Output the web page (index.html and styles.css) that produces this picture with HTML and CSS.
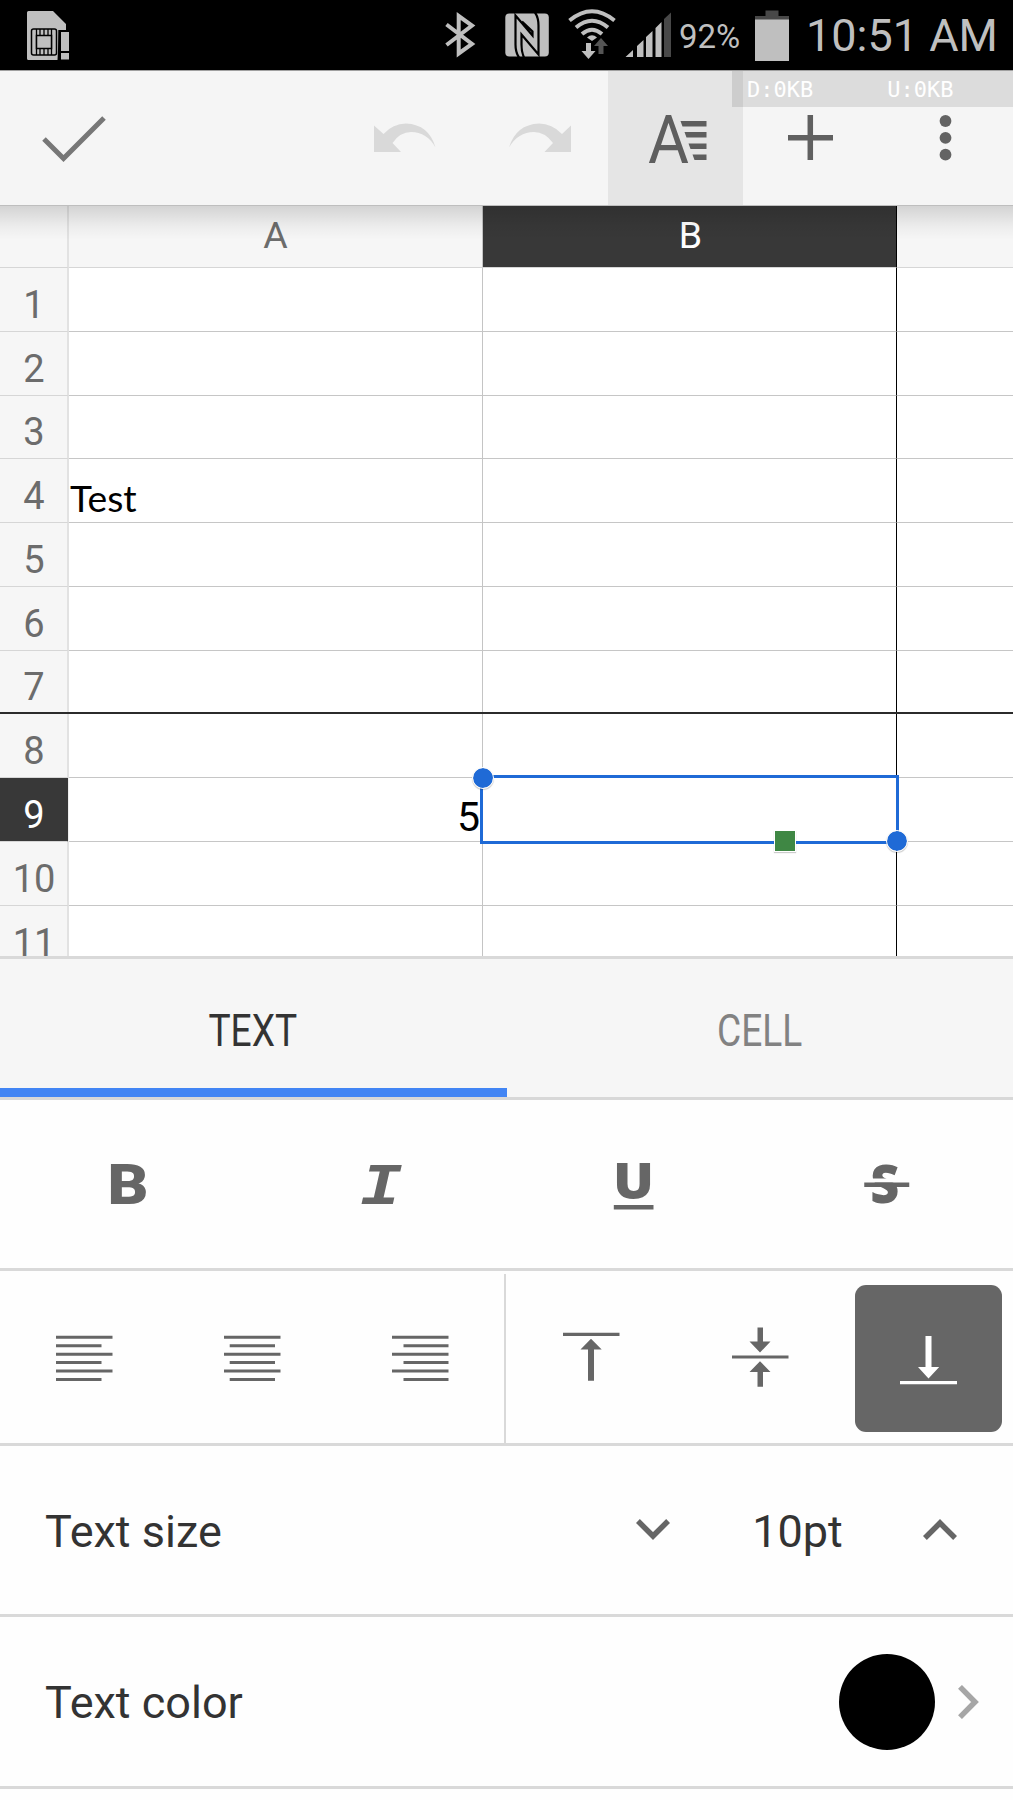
FILE: index.html
```
<!DOCTYPE html>
<html lang="en">
<head>
    <meta charset="UTF-8">
    <meta name="viewport" content="width=device-width, initial-scale=1.0">
    <title>Sheets</title>
    <link rel="stylesheet" href="styles.css">
</head>
<body>

    <div class="status-bar">
        <svg class="sim" width="44" height="52" viewBox="26 10 44 52">
            <path d="M28.500 11H53L66 24V30H59L57.500 60H28.500Q27 60 27 58.500V12.500Q27 11 28.500 11Z" fill="#bfbfbf"/>
            <rect x="31.500" y="29" width="25" height="26" rx="2" fill="#bfbfbf" stroke="#000" stroke-width="1.500"/>
            <path d="M36.500 29V55M51.500 29V55M40 29V35M44 29V35M48 29V35M40 49V55M44 49V55M48 49V55" stroke="#000" stroke-width="1.300"/>
            <rect x="36.500" y="35.500" width="15" height="13" fill="#bfbfbf" stroke="#000" stroke-width="1.500"/>
            <path d="M58.300 30H70V61H58.300Z" fill="#000"/>
            <path d="M61 32H69V51H61ZM61 53H69V59.500H61Z" fill="#bfbfbf"/>
        </svg>
        <div class="status-icons">
            <svg width="34" height="50" viewBox="443 10 34 50">
                <path d="M446.500 24.500L472 44L458.700 53.500V16L472 25.500L446.500 45" fill="none" stroke="#bfbfbf" stroke-width="4"/>
            </svg>
            <svg width="45" height="44" viewBox="505 12.500 45 44">
                <rect x="505.300" y="13" width="43.500" height="43" rx="4" fill="#bfbfbf"/>
                <path d="M519 57Q515.500 52 515.500 44V15L532.500 35V31L522 21M535 12Q538.500 17 538.500 25V54L521.500 34V44Q521.500 52 524 57" fill="none" stroke="#000" stroke-width="2.200"/>
            </svg>
            <svg width="48" height="52" viewBox="568 9 48 52">
                <g fill="none" stroke="#bfbfbf" stroke-width="4">
                    <path d="M569.500 20.500Q592 2 614.500 20.500"/>
                    <path d="M576 27.500Q592 14 608 27.500"/>
                    <path d="M582 34Q592 25.500 602 34"/>
                </g>
                <path d="M587 37.500Q592 33 597 37.500L592 41Z" fill="#bfbfbf"/>
                <path d="M586 43H591V51H595.500L588.500 59L581.500 51H586Z" fill="#bfbfbf"/>
                <path d="M601 38L608 46H603.500V54H598.500V46H594Z" fill="#555"/>
            </svg>
            <svg width="46" height="46" viewBox="625 12 46 46">
                <path d="M625.500 57L633 50V57ZM637 46L643.500 40V57H637ZM646 37L652.500 31V57H646ZM655.500 28L661.500 22V57H655.500Z" fill="#bfbfbf"/>
                <path d="M664 19L671 12.500V57H664Z" fill="#484848"/>
            </svg>
            <span class="percent">92%</span>
            <svg class="battery" width="34" height="51" viewBox="755 8 34 51">
                <path d="M765.500 8.500H778.500V14H789V18H755V14H765.500Z" fill="#484848"/>
                <rect x="755" y="17.500" width="34" height="41.500" fill="#bfbfbf"/>
            </svg>
            <span class="clock">10:51 AM</span>
        </div>
    </div>

    <div class="toolbar">
        <button class="tool done">
            <svg width="148" height="135" viewBox="0 71 148 135">
                <path d="M44 139L63.500 158.500L104 118" fill="none" stroke="#777" stroke-width="5"/>
            </svg>
        </button>
        <button class="tool">
            <svg width="135" height="135" viewBox="338 71 135 135">
                <path d="M374 125.500L383.500 134Q393 123.500 406 123.500Q429 124.500 435.500 147.500Q427 132 411 132Q400 132 392.500 143L401 152H374Z" fill="#d9d9d9"/>
            </svg>
        </button>
        <button class="tool">
            <svg width="135" height="135" viewBox="473 71 135 135">
                <path d="M571 125.500L562 134Q552 123.500 539 123.500Q516 124.500 509 147.500Q518 132 534 132Q545 132 553 143L544.500 152H571Z" fill="#d9d9d9"/>
            </svg>
        </button>
        <button class="tool active">
            <svg width="135" height="135" viewBox="608 71 135 135">
                <text class="format-letter" x="648" y="163" textLength="41" lengthAdjust="spacingAndGlyphs">A</text>
                <path d="M680.500 121H706.500V126.500H682.500ZM684.500 132H706.500V137.500H686.500ZM688.500 143.500H706.500V149H690.500ZM692.500 154.500H706.500V160H694.500Z" fill="#5e5e5e"/>
            </svg>
        </button>
        <button class="tool">
            <svg width="135" height="135" viewBox="743 71 135 135">
                <path d="M788 137.800H833M810.300 115V160" fill="none" stroke="#606060" stroke-width="5.500"/>
            </svg>
        </button>
        <button class="tool">
            <svg width="135" height="135" viewBox="878 71 135 135">
                <g fill="#636363">
                    <circle cx="945.500" cy="121" r="5.900"/>
                    <circle cx="945.500" cy="137.800" r="5.900"/>
                    <circle cx="945.500" cy="154.700" r="5.900"/>
                </g>
            </svg>
        </button>
        <div class="net-speed"><span>D:0KB</span><span>U:0KB</span></div>
    </div>

    <div class="sheet" id="sheet">
        <div class="col-head"></div>
        <div class="col-head">A</div>
        <div class="col-head selected">B</div>
        <div class="col-head last"></div>
        <!-- rows are added by the script below -->
        <div class="freeze-row"></div>
        <div class="selection">
            <i class="handle start"></i>
            <i class="handle end"></i>
            <i class="fill-handle"></i>
        </div>
    </div>

    <div class="tabs">
        <div class="tab current"><span>TEXT</span></div>
        <div class="tab"><span>CELL</span></div>
    </div>

    <div class="panel-row styles-row">
        <svg viewBox="0 1100 253.250 168">
            <text class="letter bold" x="107.500" y="1204" textLength="41" lengthAdjust="spacingAndGlyphs">B</text>
        </svg>
        <svg viewBox="253.250 1100 253.250 168">
            <text class="letter italic" x="360" y="1204" textLength="42" lengthAdjust="spacingAndGlyphs">I</text>
        </svg>
        <svg viewBox="506.500 1100 253.250 168">
            <text class="letter underline" x="612.500" y="1199" textLength="41" lengthAdjust="spacingAndGlyphs">U</text>
            <rect x="613.300" y="1205" width="39.700" height="4.500" fill="#666"/>
        </svg>
        <svg viewBox="759.750 1100 253.250 168">
            <text class="letter strike" x="870" y="1203" textLength="29" lengthAdjust="spacingAndGlyphs">S</text>
            <rect x="864" y="1178.500" width="45" height="4" fill="#fefefe"/>
            <rect x="864" y="1182.500" width="45" height="4.500" fill="#666"/>
        </svg>
    </div>

    <div class="panel-row align-row">
        <div class="group horizontal">
            <svg viewBox="0 1271 168 172">
                <path d="M56 1337.300H112.500M56 1345.700H101.500M56 1354.200H112.500M56 1362.600H101.500M56 1371.100H112.500M56 1379.500H101.500" stroke="#666" stroke-width="3"/>
            </svg>
            <svg viewBox="168 1271 168 172">
                <path d="M224 1337.300H280.500M229.700 1345.700H275M224 1354.200H280.500M229.700 1362.600H275M224 1371.100H280.500M229.700 1379.500H275" stroke="#666" stroke-width="3"/>
            </svg>
            <svg viewBox="336 1271 168 172">
                <path d="M392 1337.300H448.500M403.500 1345.700H448.500M392 1354.200H448.500M403.500 1362.600H448.500M392 1371.100H448.500M403.500 1379.500H448.500" stroke="#666" stroke-width="3"/>
            </svg>
        </div>
        <div class="group vertical">
            <div class="valign">
                <svg width="57" height="60" viewBox="0 0 57 60">
                    <path d="M0 5.800H56.500V9H0ZM28 11.700L38.700 22.500H31V53.700H25V22.500H17.500Z"/>
                </svg>
            </div>
            <div class="valign">
                <svg width="57" height="60" viewBox="0 0 57 60">
                    <path d="M0 28.400H56.500V31.600H0ZM25.500 .4H31V14.500H38.500L28 25.500L17.500 14.500H25.500ZM28 34.200L38.500 45H31V59.700H25.500V45H17.500Z"/>
                </svg>
            </div>
            <div class="valign on">
                <svg width="57" height="60" viewBox="0 0 57 60">
                    <path d="M0 54H57V57.200H0ZM25.500 9H31.500V40H39.200L28.500 51.500L18 40H25.500Z"/>
                </svg>
            </div>
        </div>
    </div>

    <div class="panel-row option">
        <span class="label">Text size</span>
        <svg width="34" height="22" viewBox="0 0 34 22"><path d="M1.900 2L17 17L32.100 2" fill="none" stroke="#666" stroke-width="5.500"/></svg>
        <span class="value">10pt</span>
        <svg width="34" height="22" viewBox="0 0 34 22"><path d="M1.900 19L17 4L32.100 19" fill="none" stroke="#666" stroke-width="5.500"/></svg>
    </div>

    <div class="panel-row option color">
        <span class="label">Text color</span>
        <span class="swatch"></span>
        <svg width="22" height="34" viewBox="0 0 22 34"><path d="M2 1.900L17 17L2 32.100" fill="none" stroke="#a6a6a6" stroke-width="5.500"/></svg>
    </div>

    <script>
        const sheet = document.getElementById("sheet");
        const values = { A4: "Test", A9: "5" };
        const selectedRow = 9;

        for (let row = 1; row <= 11; row++) {
            const head = document.createElement("div");
            head.className = row === selectedRow ? "row-head selected" : "row-head";
            head.innerHTML = `<span>${row}</span>`;
            sheet.appendChild(head);

            ["A", "B", "C"].forEach(col => {
                const value = values[col + row] || "";
                const cell = document.createElement("div");
                cell.className = "cell col-" + col.toLowerCase();
                if (value && !isNaN(value)) cell.classList.add("number");
                cell.innerHTML = value ? `<span>${value}</span>` : "";
                sheet.appendChild(cell);
            });
        }
    </script>

</body>
</html>
```
FILE: styles.css
```
* {
    box-sizing: border-box;
}
body {
    margin: 0;
    width: 1013px;
    height: 1800px;
    overflow: hidden;
    background-color: #fefefe;
    font-family: Roboto, sans-serif;
    color: #333;
}
svg {
    display: block;
    flex: none;
}

/* status bar */
.status-bar {
    display: flex;
    justify-content: space-between;
    height: 71px;
    padding: 0 19px 0 26px;
    background-color: #000;
    border-bottom: 1px solid #a0a0a0;
    color: #bfbfbf;
}
.sim {
    margin-top: 10px;
}
.status-icons {
    display: flex;
    align-items: center;
}
.status-icons svg:first-child {
    margin-right: 28px;
}
.status-icons svg:nth-child(2) {
    margin-right: 18px;
}
.status-icons svg:nth-child(3) {
    margin-right: 9px;
}
.status-icons svg:nth-child(4) {
    margin-right: 8px;
}
.status-icons .battery {
    margin-right: 17px;
}
.percent {
    width: 76px;
    font-size: 33px;
    padding-top: 2px;
}
.clock {
    width: 188px;
    font-size: 45px;
    white-space: nowrap;
}

/* toolbar */
.toolbar {
    position: relative;
    display: flex;
    height: 135px;
    background-color: #f5f5f5;
    border-bottom: 1px solid #bebebe;
}
.toolbar::after {
    content: "";
    position: absolute;
    top: 135px;
    left: 0;
    right: 0;
    height: 34px;
    z-index: 2;
    background: linear-gradient(rgba(0, 0, 0, 0.14), rgba(0, 0, 0, 0.04) 60%, rgba(0, 0, 0, 0));
}
.tool {
    width: 135px;
    height: 134px;
    padding: 0;
    border: none;
    background: none;
    overflow: hidden;
}
.tool.done {
    width: 148px;
    margin-right: 190px;
}
.tool.active {
    background-color: #e5e5e5;
}
.format-letter {
    font: 400 67px Roboto, sans-serif;
    fill: #5e5e5e;
}
.net-speed {
    position: absolute;
    top: 0;
    right: 0;
    display: flex;
    gap: 74px;
    width: 281px;
    height: 36px;
    padding-left: 15px;
    background-color: rgba(0, 0, 0, 0.1);
    color: #fff;
    font: 22px/38px "DejaVu Sans Mono", monospace;
}

/* sheet */
.sheet {
    position: relative;
    display: grid;
    grid-template-columns: 69px 414px 414px 116px;
    grid-template-rows: 62px;
    grid-auto-rows: 63.770px;
    height: 750px;
    overflow: hidden;
    background-color: #fff;
}
.col-head {
    display: flex;
    align-items: center;
    justify-content: center;
    padding-bottom: 3px;
    background-color: #f6f6f6;
    border-right: 2px solid #e2e2e2;
    border-bottom: 1px solid #d6d6d6;
    font-size: 37.500px;
    color: #6c6c6c;
}
.col-head:nth-child(2) {
    border-right: 1px solid #c4c4c4;
}
.col-head.selected {
    padding-left: 2px;
    background-color: #383838;
    border-right: 1px solid #000;
    color: #fff;
}
.col-head.last {
    border-right: none;
}
.row-head {
    display: flex;
    align-items: center;
    justify-content: center;
    padding-top: 11px;
    padding-left: 1px;
    background-color: #f6f6f6;
    border-right: 2px solid #e2e2e2;
    border-bottom: 1px solid #d6d6d6;
    font-size: 38px;
    color: #6c6c6c;
}
.row-head.selected {
    background: linear-gradient(#383838, #383838) no-repeat 0 0 / 68px 100% border-box #eee;
    border-right-color: transparent;
    color: #fff;
}
.cell {
    display: flex;
    align-items: flex-end;
    padding-bottom: 2px;
    border-bottom: 1px solid #c6c6c6;
    font: 37.300px/44px Lato, sans-serif;
    color: #000;
}
.cell.col-a {
    padding-left: 1px;
    border-right: 1px solid #c4c4c4;
}
.cell.col-b {
    border-right: 1px solid #000;
}
.cell.number {
    justify-content: flex-end;
    padding-right: 2px;
    font: 41px/44px Roboto, sans-serif;
}
.freeze-row {
    position: absolute;
    top: 506px;
    left: 0;
    right: 0;
    height: 2px;
    background-color: #2b2b2b;
}
.selection {
    position: absolute;
    top: 569px;
    left: 480px;
    width: 419px;
    height: 69px;
    border: 3px solid #1f6ad6;
}
.handle {
    position: absolute;
    width: 22px;
    height: 22px;
    border: 1px solid #fff;
    border-radius: 50%;
    background-color: #1f6ad6;
    background-clip: padding-box;
    box-shadow: 0 1px 1px rgba(0, 0, 0, 0.2);
}
.handle.start {
    top: -11px;
    left: -11px;
}
.handle.end {
    right: -12px;
    bottom: -11px;
}
.fill-handle {
    position: absolute;
    left: 291px;
    bottom: -11px;
    width: 22px;
    height: 22px;
    border: 1px solid #fff;
    background-color: #3f8744;
    box-shadow: 0 1px 1px rgba(0, 0, 0, 0.2);
}

/* format panel */
.tabs {
    display: flex;
    height: 144px;
    background-color: #f6f6f6;
    border-top: 3px solid #d9d9d9;
    border-bottom: 3px solid #d8d8d8;
}
.tab {
    flex: 1;
    display: flex;
    align-items: center;
    justify-content: center;
    padding-top: 13px;
    border-bottom: 9px solid transparent;
    font-size: 45px;
    color: #828282;
}
.tab span {
    transform: scaleX(0.825);
}
.tab.current {
    border-bottom-color: #4285f4;
    padding-right: 1px;
    color: #333;
}
.panel-row {
    display: flex;
    border-bottom: 3px solid #d9d9d9;
}
.styles-row {
    height: 171px;
}
.styles-row svg {
    width: 253.250px;
    height: 168px;
}
.letter {
    fill: #666;
}
.letter.bold {
    font: 900 56px Roboto, sans-serif;
}
.letter.italic {
    font: italic bold 60px "Liberation Mono", monospace;
}
.letter.underline {
    font: 800 49px "Open Sans", sans-serif;
}
.letter.strike {
    font: 800 53px "Open Sans", sans-serif;
}
.align-row {
    height: 175px;
}
.group {
    display: flex;
}
.group.horizontal {
    width: 506px;
    margin-top: 3px;
    border-right: 2px solid #d9d9d9;
}
.group.horizontal svg {
    width: 168px;
    height: 172px;
    margin-top: -3px;
}
.group.vertical {
    flex: 1;
    justify-content: space-between;
    align-items: center;
    padding: 3px 11px 0 12px;
}
.valign {
    display: flex;
    align-items: center;
    justify-content: center;
    width: 147px;
    height: 147px;
    padding-bottom: 3px;
    border-radius: 11px;
    fill: #666;
}
.valign.on {
    background-color: #666;
    fill: #fff;
}
.option {
    align-items: center;
    height: 171px;
    padding: 0 56px 0 45px;
    font-size: 45px;
}
.option .label {
    flex: 1;
    padding-top: 2px;
}
.option .value {
    width: 253px;
    text-align: center;
    padding-top: 2px;
    padding-left: 2px;
}
.option.color {
    height: 172px;
    padding-right: 33px;
}
.swatch {
    width: 96px;
    height: 96px;
    margin-right: 23px;
    border-radius: 50%;
    background-color: #000;
}
```
